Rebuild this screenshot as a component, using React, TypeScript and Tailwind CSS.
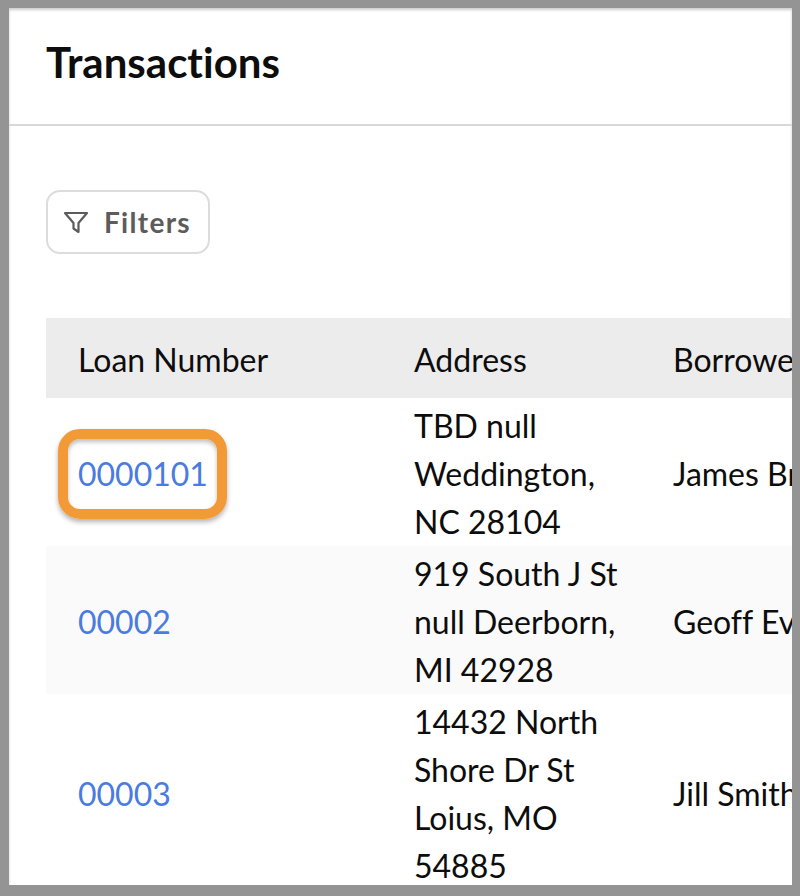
const rows = [
  { loan: "0000101", lines: ["TBD null", "Weddington,", "NC 28104"], name: "James Brown", bg: "bg-white", highlight: true },
  { loan: "00002", lines: ["919 South J St", "null Deerborn,", "MI 42928"], name: "Geoff Evans", bg: "bg-[#fafafa]", highlight: false },
  { loan: "00003", lines: ["14432 North", "Shore Dr St", "Loius, MO", "54885"], name: "Jill Smith", bg: "bg-white", highlight: false },
];

export default function App() {
  return (
    <div className="h-[896px] w-[800px] overflow-hidden bg-[#949494] pb-[11px] pl-[9px] pr-[8px] pt-[8px] font-['Lato',sans-serif] text-[#0d0d0d] [font-variant-ligatures:none]">
      <div className="h-full w-full overflow-hidden bg-white shadow-[inset_0_2px_3px_rgba(0,0,0,0.2)]">
        <div className="flex h-[118px] items-center border-b-2 border-[#d9d9d9] pl-[37px]">
          <h1 className="pb-[8px] text-[42px] font-bold leading-[44px]">Transactions</h1>
        </div>
        <div className="pl-[37px] pt-[64px]">
          <button className="flex h-[64px] w-[164px] items-center gap-[14px] rounded-[14px] border-2 border-[#dcdcdc] pl-[14px] text-[28px] font-bold tracking-[1.3px] text-[#5c5c5c]">
            <svg width="28" height="28" viewBox="0 0 28 28" fill="none" stroke="#5c5c5c" strokeWidth="2.2" strokeLinejoin="round">
              <path d="M3 5h22l-8.5 10v9l-5-3.5V15z" />
            </svg>
            Filters
          </button>
          <div className="mt-[64px] w-[900px] text-[32px] leading-[48px]">
            <div className="flex h-[80px] items-center bg-[#ececec] pt-[4px]">
              <div className="w-[368px] pl-[32px]">Loan Number</div>
              <div className="w-[259px]">Address</div>
              <div>Borrower</div>
            </div>
            {rows.map((r) => (
              <div key={r.loan} className={`flex items-center pt-[4px] ${r.bg}`}>
                <div className="w-[368px] pl-[32px]">
                  <div className="relative w-fit text-[#4a7be0]">
                    {r.loan}
                    {r.highlight && (
                      <div className="absolute -left-[20px] -top-[21px] h-[90px] w-[169px] rounded-[22px] border-[10px] border-[#f29a38] shadow-[0_3px_5px_rgba(0,0,0,0.3),inset_0_3px_4px_rgba(0,0,0,0.25)]" />
                    )}
                  </div>
                </div>
                <div className="w-[259px]">
                  {r.lines.map((l) => (
                    <div key={l}>{l}</div>
                  ))}
                </div>
                <div>{r.name}</div>
              </div>
            ))}
          </div>
        </div>
      </div>
    </div>
  );
}
